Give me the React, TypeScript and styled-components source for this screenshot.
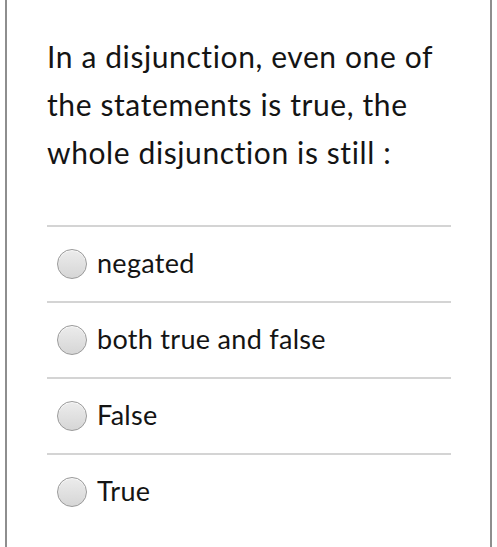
import { createGlobalStyle, styled } from 'styled-components';

const GlobalStyle = createGlobalStyle`
  html, body {
    margin: 0;
    padding: 0;
    background: #ffffff;
  }
  body {
    font-family: Lato, "Noto Sans", sans-serif;
    color: #141414;
  }
`;

const options = ['negated', 'both true and false', 'False', 'True'];

const App = () => {
  return (
    <>
      <GlobalStyle />
      <Card>
        <Question>
          In a disjunction, even one of the statements is true, the whole disjunction is still :
        </Question>
        <OptionList>
          {options.map((label) => (
            <OptionRow key={label}>
              <Radio />
              <OptionLabel>{label}</OptionLabel>
            </OptionRow>
          ))}
        </OptionList>
      </Card>
    </>
  );
};

const Card = styled.div`
  box-sizing: border-box;
  margin-left: 5px;
  width: 487px;
  height: 547px;
  border-left: 2px solid #8e8e8e;
  border-right: 2px solid #8e8e8e;
  padding: 32px 39px 0 40px;
`;

const Question = styled.p`
  margin: 0 0 49px;
  font-size: 30px;
  line-height: 48px;
  letter-spacing: 0.6px;
`;

const OptionList = styled.div`
  display: flex;
  flex-direction: column;
`;

const OptionRow = styled.div`
  display: flex;
  align-items: center;
  gap: 10px;
  height: 76px;
  padding: 0 0 3px 10px;
  border-top: 2px solid #d4d4d4;
  box-sizing: border-box;
`;

const Radio = styled.span`
  flex: none;
  width: 28px;
  height: 28px;
  margin-top: 2px;
  border-radius: 50%;
  border: 1px solid #9a9a9a;
  background: linear-gradient(180deg, #ececec 0%, #d6d6d6 100%);
  box-shadow: inset 0 1px 1px rgba(255, 255, 255, 0.8);
`;

const OptionLabel = styled.span`
  font-size: 27px;
  line-height: 30px;
  letter-spacing: 0.3px;
`;

export default App;
